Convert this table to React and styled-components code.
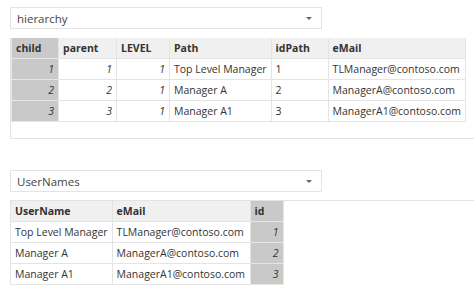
import React from 'react';
import styled, { createGlobalStyle } from 'styled-components';

const GlobalStyle = createGlobalStyle`
  html, body {
    margin: 0;
    padding: 0;
    background: #ffffff;
  }
  body {
    font-family: "Open Sans", "Noto Sans", sans-serif;
    color: #333333;
    overflow: hidden;
  }
`;

const Page = styled.div`
  width: 474px;
  height: 287px;
  padding: 7px 0 0 10px;
  box-sizing: border-box;
  overflow: hidden;
`;

const Section = styled.div`
  margin-bottom: ${(p) => p.gap || 0}px;
`;

const Dropdown = styled.div`
  width: 312px;
  height: 22px;
  box-sizing: border-box;
  border: 1px solid #e3e3e3;
  display: flex;
  align-items: center;
  justify-content: space-between;
  padding: 0 9px 0 6px;
  font-size: 11.5px;
  color: #444444;
`;

const Arrow = styled.span`
  width: 0;
  height: 0;
  border-left: 3px solid transparent;
  border-right: 3px solid transparent;
  border-top: 3px solid #666666;
`;

const Frame = styled.div`
  margin-top: ${(p) => (p.open ? 8 : 9)}px;
  border-left: ${(p) => (p.open ? 'none' : '1px solid #e3e3e3')};
  border-bottom: ${(p) => (p.open ? 'none' : '1px solid #e3e3e3')};
  border-top: ${(p) => (p.open ? '1px solid #e3e3e3' : 'none')};
  height: ${(p) => p.h}px;
  box-sizing: border-box;
`;

const Table = styled.table`
  border-collapse: collapse;
  table-layout: fixed;
  font-size: 10.5px;
`;

const Th = styled.th`
  height: 20px;
  padding: 0 4px;
  text-align: left;
  font-weight: 700;
  color: #333333;
  background: ${(p) => (p.dark ? '#c9c9c9' : '#f0f0f0')};
  border: 1px solid ${(p) => (p.dark ? '#e6e6e6' : '#e4e4e4')};
  border-top: none;
  white-space: nowrap;
  overflow: hidden;
`;

const Td = styled.td`
  height: 20px;
  padding: 0 4px;
  text-align: ${(p) => (p.num ? 'right' : 'left')};
  font-style: ${(p) => (p.num ? 'italic' : 'normal')};
  background: ${(p) => (p.dark ? '#c9c9c9' : '#ffffff')};
  border: 1px solid ${(p) => (p.dark ? '#e6e6e6' : '#e4e4e4')};
  white-space: nowrap;
  overflow: hidden;
  color: #333333;
`;

const hierarchy = [
  [1, 1, 1, 'Top Level Manager', '1', 'TLManager@contoso.com'],
  [2, 2, 1, 'Manager A', '2', 'ManagerA@contoso.com'],
  [3, 3, 1, 'Manager A1', '3', 'ManagerA1@contoso.com'],
];

const users = [
  ['Top Level Manager', 'TLManager@contoso.com', 1],
  ['Manager A', 'ManagerA@contoso.com', 2],
  ['Manager A1', 'ManagerA1@contoso.com', 3],
];

const App = () => (
  <Page>
    <GlobalStyle />
    <Section gap={31}>
      <Dropdown>
        <span>hierarchy</span>
        <Arrow />
      </Dropdown>
      <Frame h={101}>
        <Table>
          <colgroup>
            <col style={{ width: 47 }} />
            <col style={{ width: 58 }} />
            <col style={{ width: 53 }} />
            <col style={{ width: 101 }} />
            <col style={{ width: 57 }} />
            <col style={{ width: 136 }} />
          </colgroup>
          <thead>
            <tr>
              <Th dark>child</Th>
              <Th>parent</Th>
              <Th>LEVEL</Th>
              <Th>Path</Th>
              <Th>idPath</Th>
              <Th>eMail</Th>
            </tr>
          </thead>
          <tbody>
            {hierarchy.map(([c, p, l, path, idp, mail]) => (
              <tr key={c}>
                <Td dark num>{c}</Td>
                <Td num>{p}</Td>
                <Td num>{l}</Td>
                <Td>{path}</Td>
                <Td>{idp}</Td>
                <Td>{mail}</Td>
              </tr>
            ))}
          </tbody>
        </Table>
      </Frame>
    </Section>
    <Section>
      <Dropdown>
        <span>UserNames</span>
        <Arrow />
      </Dropdown>
      <Frame open h={100}>
        <Table>
          <colgroup>
            <col style={{ width: 100 }} />
            <col style={{ width: 138 }} />
            <col style={{ width: 33 }} />
          </colgroup>
          <thead>
            <tr>
              <Th>UserName</Th>
              <Th>eMail</Th>
              <Th dark>id</Th>
            </tr>
          </thead>
          <tbody>
            {users.map(([name, mail, id]) => (
              <tr key={id}>
                <Td>{name}</Td>
                <Td>{mail}</Td>
                <Td dark num>{id}</Td>
              </tr>
            ))}
          </tbody>
        </Table>
      </Frame>
    </Section>
  </Page>
);

export default App;
